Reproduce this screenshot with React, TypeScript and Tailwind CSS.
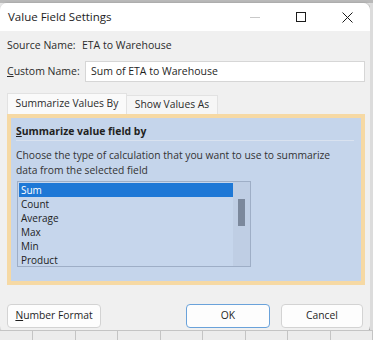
import React from "react";

const items = ["Sum", "Count", "Average", "Max", "Min", "Product"];
const gridCols = [35, 45, 45, 45, 45, 45, 45, 45, 45];

function TitleBar() {
  return (
    <div className="flex items-center h-[28px] bg-white rounded-t-[7px] pl-[8px]">
      <span className="text-[11.5px] text-[#1b1b1b] leading-none whitespace-nowrap">Value Field Settings</span>
      <div className="ml-auto flex items-center h-full">
        {/* minimize (disabled) */}
        <div className="w-[46px] h-full flex items-center justify-center">
          <div className="w-[10px] h-px bg-[#c9c9c9]" />
        </div>
        {/* maximize */}
        <div className="w-[46px] h-full flex items-center justify-center">
          <div className="w-[10px] h-[10px] border border-[#1b1b1b]" />
        </div>
        {/* close */}
        <div className="w-[46px] h-full flex items-center justify-center">
          <svg width="11" height="11" viewBox="0 0 11 11" fill="none" stroke="#1b1b1b" strokeWidth="1">
            <path d="M0.5 0.5 L10.5 10.5 M10.5 0.5 L0.5 10.5" />
          </svg>
        </div>
      </div>
    </div>
  );
}

function ListBox() {
  return (
    <div className="flex w-[234px] h-[86px] border border-[#9eaec6] bg-[#c6d6ec]">
      <div className="flex-1 pt-px pl-px">
        {items.map((it, i) => (
          <div
            key={it}
            className={`h-[14px] pl-[2px] text-[10px] leading-[14px] whitespace-nowrap ${
              i === 0 ? "bg-[#1e78d6] text-white" : "text-[#222]"
            }`}
          >
            {it}
          </div>
        ))}
      </div>
      <div className="w-[17px] bg-[#bfcee4] flex justify-center pt-[17px]">
        <div className="w-[7px] h-[27px] bg-[#7b889c]" />
      </div>
    </div>
  );
}

function Button({ children, primary }: { children: React.ReactNode; primary?: boolean }) {
  return (
    <div
      className={`h-[24px] flex items-center justify-center rounded-[4px] bg-[#fdfdfd] text-[10.3px] text-[#1f1f1f] whitespace-nowrap border ${
        primary ? "w-[84px] border-[#6aa2da]" : "border-[#d3d3d3]"
      }`}
    >
      {children}
    </div>
  );
}

export default function App() {
  return (
    <div
      className="w-[373px] h-[340px] overflow-hidden bg-[#e9e9e9] flex flex-col"
      style={{ fontFamily: '"Open Sans", "Noto Sans", sans-serif' }}
    >
      <div className="h-[3px] bg-[#b9b9b9]" />
      <div className="flex">
        <div className="w-[370px] h-[330px] flex flex-col rounded-[7px] shadow-[1px_1px_3px_rgba(0,0,0,0.45)] bg-[#f0f0f0]">
          <TitleBar />
          <div className="flex-1 flex flex-col px-[7px] pt-[7px] text-[#2b2b2b] whitespace-nowrap">
            <div className="flex items-center h-[16px] text-[10.5px]">
              <span className="w-[75px]">Source Name:</span>
              <span>ETA to Warehouse</span>
            </div>
            <div className="flex items-center h-[21px] mt-[7px] text-[10.5px]">
              <span className="w-[78px]">
                <span className="underline">C</span>ustom Name:
              </span>
              <div className="flex-1 h-full mr-[-2px] bg-white border border-[#d6d6d6] flex items-center pl-[5px] text-[#1f1f1f]">
                Sum of ETA to Warehouse
              </div>
            </div>

            {/* tabs */}
            <div className="flex items-end h-[21px] mt-[11px] text-[10.3px]">
              <div className="h-[21px] w-[120px] flex items-center justify-center bg-[#fafafa] border-t border-x border-[#e2e2e2]">
                Summarize Values By
              </div>
              <div className="h-[19px] w-[91px] flex items-center justify-center bg-[#f6f6f6] border-t border-r border-[#e2e2e2]">
                Show Values As
              </div>
            </div>

            {/* panel */}
            <div className="w-[358px] h-[171px] border-[4px] border-[#f6d9a4] bg-[#c5d5eb] px-[5px] pt-[5px]">
              <div className="text-[10.4px] font-bold text-[#1f1f1f] leading-[16px]">
                <span className="underline">S</span>ummarize value field by
              </div>
              <div className="h-px bg-[#d9e2ef] mt-[1px] mr-[2px]" />
              <div className="mt-[7px] text-[10.3px] leading-[15px] text-[#333]">
                Choose the type of calculation that you want to use to summarize
                <br />
                data from the selected field
              </div>
              <div className="mt-[3px] ml-px">
                <ListBox />
              </div>
            </div>

            {/* buttons */}
            <div className="flex items-center mt-[19px]">
              <div className="w-[94px]">
                <Button>
                  <span>
                    <span className="underline">N</span>umber Format
                  </span>
                </Button>
              </div>
              <div className="ml-auto flex gap-[11px]">
                <Button primary>OK</Button>
                <div className="w-[82px]">
                  <Button>Cancel</Button>
                </div>
              </div>
            </div>
          </div>
        </div>
        <div className="flex-1 bg-[#dcdcdc]" />
      </div>
      <div className="flex-1 flex mt-[-3px] border-t border-[#c4c4c4] bg-[#ececec]">
        {gridCols.map((w, i) => (
          <div key={i} style={{ width: w }} className="h-full border-r border-[#c4c4c4]" />
        ))}
      </div>
    </div>
  );
}
